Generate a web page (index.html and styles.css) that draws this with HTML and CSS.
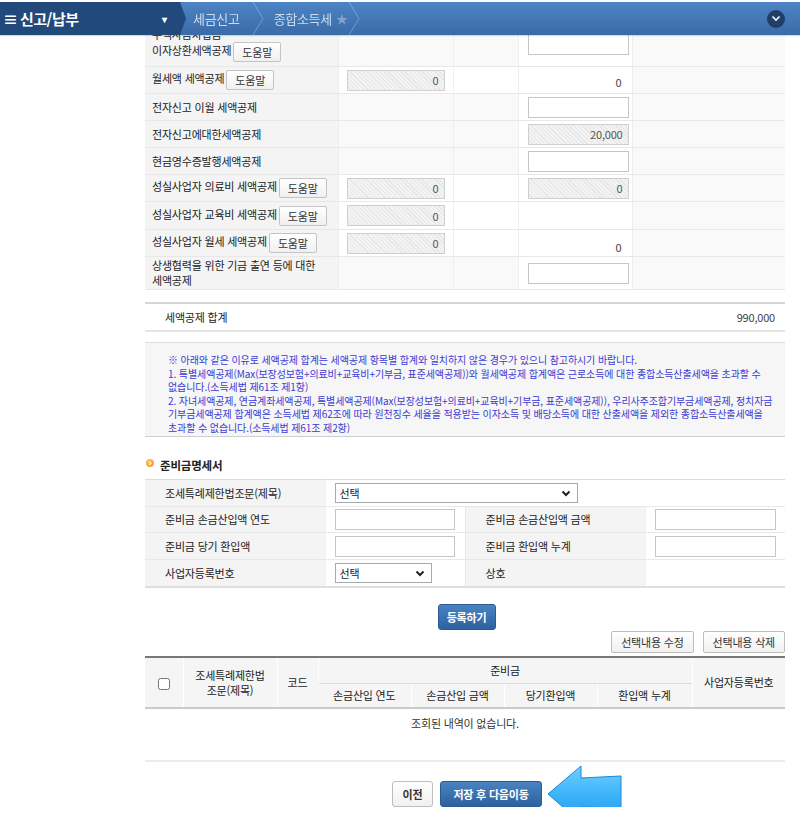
FILE: index.html
```html
<!DOCTYPE html>
<html lang="ko">
<head>
  <meta charset="UTF-8">
  <meta name="viewport" content="width=device-width, initial-scale=1.0">
  <title>신고/납부 - 종합소득세</title>
  <link rel="stylesheet" href="styles.css">
</head>
<body>
  <header class="topbar">
    <div class="menu-title">
      <span class="burger">&#8801;</span>
      <span class="menu-name">신고/납부</span>
      <span class="caret">&#9662;</span>
    </div>
    <nav class="crumbs">
      <span class="crumb">세금신고</span>
      <svg class="sep" width="12" height="33" viewBox="0 0 12 33"><polyline points="1,0 11,16.5 1,33" fill="none" stroke="rgba(255,255,255,0.28)" stroke-width="1"/></svg>
      <span class="crumb">종합소득세</span>
      <span class="star">&#9733;</span>
      <svg class="sep" width="12" height="33" viewBox="0 0 12 33"><polyline points="1,0 11,16.5 1,33" fill="none" stroke="rgba(255,255,255,0.28)" stroke-width="1"/></svg>
    </nav>
    <span class="toggle">
      <svg width="10" height="7" viewBox="0 0 10 7"><polyline points="1.5,1.5 5,5 8.5,1.5" fill="none" stroke="#fff" stroke-width="1.6"/></svg>
    </span>
  </header>

  <main class="content">
    <table class="grid deduct">
      <colgroup>
        <col class="w193"><col class="w115"><col class="w65"><col class="w114"><col class="w153">
      </colgroup>
      <tr class="r-first">
        <th>주택자금차입금<br>이자상환세액공제<button class="help">도움말</button></th>
        <td class="empty"></td><td class="empty"></td>
        <td class="in4"><input class="field w101" type="text"></td>
        <td class="empty"></td>
      </tr>
      <tr>
        <th>월세액 세액공제<button class="help">도움말</button></th>
        <td class="in2"><input class="field w98 locked" type="text" value="0" disabled></td>
        <td></td>
        <td class="num">0</td>
        <td class="empty"></td>
      </tr>
      <tr>
        <th>전자신고 이월 세액공제</th>
        <td class="empty"></td><td class="empty"></td>
        <td class="in4"><input class="field w101" type="text"></td>
        <td class="empty"></td>
      </tr>
      <tr>
        <th>전자신고에대한세액공제</th>
        <td class="empty"></td><td class="empty"></td>
        <td class="in4"><input class="field w101 locked" type="text" value="20,000" disabled></td>
        <td class="empty"></td>
      </tr>
      <tr>
        <th>현금영수증발행세액공제</th>
        <td class="empty"></td><td class="empty"></td>
        <td class="in4"><input class="field w101" type="text"></td>
        <td class="empty"></td>
      </tr>
      <tr>
        <th>성실사업자 의료비 세액공제<button class="help">도움말</button></th>
        <td class="in2"><input class="field w98 locked" type="text" value="0" disabled></td>
        <td></td>
        <td class="in4"><input class="field w101 locked" type="text" value="0" disabled></td>
        <td class="empty"></td>
      </tr>
      <tr class="r-28">
        <th>성실사업자 교육비 세액공제<button class="help">도움말</button></th>
        <td class="in2"><input class="field w98 locked" type="text" value="0" disabled></td>
        <td></td>
        <td></td>
        <td class="empty"></td>
      </tr>
      <tr>
        <th>성실사업자 월세 세액공제<button class="help">도움말</button></th>
        <td class="in2"><input class="field w98 locked" type="text" value="0" disabled></td>
        <td></td>
        <td class="num low">0</td>
        <td class="empty"></td>
      </tr>
      <tr class="r-last">
        <th>상생협력을 위한 기금 출연 등에 대한<br>세액공제</th>
        <td class="empty"></td><td class="empty"></td>
        <td class="in4"><input class="field w101" type="text"></td>
        <td class="empty"></td>
      </tr>
    </table>

    <table class="total">
      <tr>
        <th>세액공제 합계</th>
        <td>990,000</td>
      </tr>
    </table>

    <div class="notice">
      ※ 아래와 같은 이유로 세액공제 합계는 세액공제 항목별 합계와 일치하지 않은 경우가 있으니 참고하시기 바랍니다.<br>
      1. 특별세액공제(Max(보장성보험+의료비+교육비+기부금, 표준세액공제))와 월세액공제 합계액은 근로소득에 대한 종합소득산출세액을 초과할 수<br>
      없습니다.(소득세법 제61조 제1항)<br>
      2. 자녀세액공제, 연금계좌세액공제, 특별세액공제(Max(보장성보험+의료비+교육비+기부금, 표준세액공제)), 우리사주조합기부금세액공제, 정치자금<br>
      기부금세액공제 합계액은 소득세법 제62조에 따라 원천징수 세율을 적용받는 이자소득 및 배당소득에 대한 산출세액을 제외한 종합소득산출세액을<br>
      초과할 수 없습니다.(소득세법 제61조 제2항)
    </div>

    <h2 class="sub-title"><span class="bullet"></span>준비금명세서</h2>

    <table class="grid reserve">
      <colgroup>
        <col class="w180"><col class="w140"><col class="w180"><col class="w140">
      </colgroup>
      <tr>
        <th>조세특례제한법조문(제목)</th>
        <td colspan="3">
          <div class="select w243">
            <select><option>선택</option></select>
            <svg width="10" height="7" viewBox="0 0 10 7"><polyline points="1.5,1.5 5,5 8.5,1.5" fill="none" stroke="#222" stroke-width="2"/></svg>
          </div>
        </td>
      </tr>
      <tr class="r-26">
        <th>준비금 손금산입액 연도</th>
        <td><input class="field w120" type="text"></td>
        <th>준비금 손금산입액 금액</th>
        <td><input class="field w121" type="text"></td>
      </tr>
      <tr>
        <th>준비금 당기 환입액</th>
        <td><input class="field w120" type="text"></td>
        <th>준비금 환입액 누계</th>
        <td><input class="field w121" type="text"></td>
      </tr>
      <tr>
        <th>사업자등록번호</th>
        <td>
          <div class="select w97">
            <select><option>선택</option></select>
            <svg width="10" height="7" viewBox="0 0 10 7"><polyline points="1.5,1.5 5,5 8.5,1.5" fill="none" stroke="#222" stroke-width="2"/></svg>
          </div>
        </td>
        <th>상호</th>
        <td></td>
      </tr>
    </table>

    <div class="register">
      <button class="btn-blue b58">등록하기</button>
    </div>

    <div class="list-tools">
      <button class="btn-gray">선택내용 수정</button>
      <button class="btn-gray">선택내용 삭제</button>
    </div>

    <table class="list">
      <colgroup>
        <col class="w38"><col class="w94"><col class="w41"><col class="w93"><col class="w93"><col class="w93"><col class="w95"><col class="w93">
      </colgroup>
      <thead>
        <tr class="h1">
          <th rowspan="2"><input type="checkbox"></th>
          <th rowspan="2">조세특례제한법<br>조문(제목)</th>
          <th rowspan="2">코드</th>
          <th colspan="4">준비금</th>
          <th rowspan="2">사업자등록번호</th>
        </tr>
        <tr class="h2">
          <th>손금산입 연도</th>
          <th>손금산입 금액</th>
          <th>당기환입액</th>
          <th>환입액 누계</th>
        </tr>
      </thead>
      <tbody>
        <tr><td class="nodata" colspan="8">조회된 내역이 없습니다.</td></tr>
      </tbody>
    </table>

    <div class="bottom-actions">
      <button class="btn-gray big">이전</button>
      <button class="btn-blue b102">저장 후 다음이동</button>
      <svg class="pointer" width="76" height="60" viewBox="0 0 76 60">
        <defs>
          <linearGradient id="arrowFill" x1="0" y1="0" x2="0" y2="1">
            <stop offset="0" stop-color="#6fd0ff"/>
            <stop offset="0.5" stop-color="#3db4fa"/>
            <stop offset="1" stop-color="#1f98ea"/>
          </linearGradient>
        </defs>
        <polygon points="1,29 34,1 34,13 74,11 74,43 34,42 34,58" fill="url(#arrowFill)" stroke="#1a8ad8" stroke-width="1"/>
      </svg>
    </div>
  </main>
</body>
</html>
```

FILE: styles.css
```css
body {
  margin: 0;
  font-family: "Noto Sans CJK KR", "Noto Sans", sans-serif;
  font-size: 11px;
  letter-spacing: -0.2px;
  color: #222;
  background: #fff;
}
button, input, select {
  font-family: inherit;
  letter-spacing: inherit;
}

/* top bar */
.topbar {
  position: fixed;
  top: 2px;
  left: 0;
  right: 0;
  height: 33px;
  display: flex;
  align-items: center;
  background: linear-gradient(#4d84c5, #3b6ba7);
  box-shadow: 0 1px 1px rgba(0, 0, 0, 0.15);
  z-index: 10;
  letter-spacing: 0;
}
.menu-title {
  width: 186px;
  height: 100%;
  box-sizing: border-box;
  padding-left: 3px;
  display: flex;
  align-items: center;
  background: #21497c;
  clip-path: polygon(0 0, 180px 0, 186px 50%, 180px 100%, 0 100%);
  color: #fff;
  font-weight: bold;
}
.burger {
  font-size: 15px;
  width: 17px;
}
.menu-name {
  font-size: 15px;
  letter-spacing: -0.5px;
}
.caret {
  margin-left: auto;
  margin-right: 19px;
  font-size: 10px;
}
.crumbs {
  display: flex;
  align-items: center;
  height: 100%;
  margin-left: 7px;
}
.crumb {
  font-size: 13px;
  color: #cddbee;
  letter-spacing: -0.3px;
}
.sep {
  margin: 0 10px 0 12px;
}
.star {
  color: #86a3cb;
  font-size: 12px;
  margin-left: 4px;
}
.star + .sep {
  margin-left: 0;
}
.toggle {
  margin-left: auto;
  margin-right: 15px;
  width: 18px;
  height: 18px;
  border-radius: 50%;
  background: #203e68;
  display: flex;
  align-items: center;
  justify-content: center;
}

/* content */
.content {
  width: 640px;
  margin-left: 145px;
  padding-top: 23px;
}
table {
  border-collapse: collapse;
  table-layout: fixed;
  width: 640px;
}
.w193 { width: 193px; }
.w115 { width: 115px; }
.w65 { width: 65px; }
.w114 { width: 114px; }
.w153 { width: 153px; }
.w180 { width: 180px; }
.w140 { width: 140px; }
.w38 { width: 38px; }
.w94 { width: 94px; }
.w41 { width: 41px; }
.w93 { width: 93px; }
.w95 { width: 95px; }

.grid th, .grid td {
  border-bottom: 1px solid #e8e8e8;
  border-left: 1px solid #efefef;
  padding: 0;
  height: 26px;
  background: #fff;
}
.grid th {
  background: #f4f4f4;
  font-weight: normal;
  text-align: left;
  white-space: nowrap;
  padding-left: 7px;
  line-height: 15px;
  border-left: 0;
}
.grid td.empty {
  background: #f9f9f9;
}
.deduct .r-first th, .deduct .r-first td {
  height: 43px;
}
.deduct .r-28 th, .deduct .r-28 td {
  height: 27px;
}
.deduct .r-last th, .deduct .r-last td {
  height: 32px;
}
.in2 { padding-left: 8px !important; }
.in4 { padding-left: 9px !important; }
.grid td.num {
  text-align: right;
  padding-right: 10px;
  padding-top: 4px;
  height: 22px;
  color: #444;
}
.grid td.num.low {
  padding-top: 7px;
  height: 19px;
}

.help {
  height: 20px;
  padding: 0 8px;
  margin-left: 2px;
  vertical-align: middle;
  border: 1px solid #c4c4c4;
  border-radius: 2px;
  background: linear-gradient(#fff, #f0f0f0);
  color: #333;
  font-size: 11px;
  line-height: 18px;
}

.field {
  display: block;
  height: 21px;
  box-sizing: border-box;
  border: 1px solid #c6c6c6;
  background: #fff;
  padding: 0 5px;
  font-size: 11px;
  color: #555;
  text-align: right;
}
.field.locked {
  background: repeating-linear-gradient(45deg, #f3f3f3 0 2px, #e6e6e6 2px 3px);
  border-color: #cfcfcf;
}
.w98 { width: 98px; }
.w101 { width: 101px; }
.w120 { width: 120px; }
.w121 { width: 121px; }

.total {
  margin-top: 12px;
  border-top: 2px solid #d6d6d6;
  border-bottom: 2px solid #e4e4e4;
}
.total th, .total td {
  height: 26px;
  padding: 0;
}
.total th {
  width: 173px;
  padding-left: 20px;
  text-align: left;
  font-weight: normal;
}
.total td {
  text-align: right;
  padding-right: 10px;
  color: #444;
}

.notice {
  margin-top: 10px;
  padding: 10px 0 2px 23px;
  background: #f6f6f6;
  border-top: 1px solid #dedede;
  border-bottom: 1px solid #cfcfcf;
  color: #3b3bd4;
  font-size: 10px;
  line-height: 13.5px;
  letter-spacing: -0.1px;
  white-space: nowrap;
}

.sub-title {
  margin: 20px 0 6px;
  height: 16px;
  display: flex;
  align-items: center;
  font-size: 11.5px;
  font-weight: bold;
  color: #222;
}
.bullet {
  width: 8px;
  height: 8px;
  border-radius: 50%;
  background: radial-gradient(circle at 40% 35%, #ffc86a, #f08a12);
  margin: 0 6px 4px 1px;
  position: relative;
}
.bullet::after {
  content: "";
  position: absolute;
  left: 2px;
  top: 2.5px;
  width: 2px;
  height: 2px;
  border-top: 1px solid #fff;
  border-right: 1px solid #fff;
  transform: rotate(45deg);
}

.reserve {
  border-top: 1px solid #dcdcdc;
  border-bottom: 2px solid #dedede;
}
.reserve th {
  padding-left: 20px;
  border-left: 1px solid #e8e8e8;
}
.reserve th:first-child {
  border-left: 0;
}
.reserve td {
  padding-left: 9px;
  height: 26px;
}
.reserve .r-26 th, .reserve .r-26 td {
  height: 25px;
}

.select {
  display: flex;
  align-items: center;
  height: 20px;
  box-sizing: border-box;
  border: 1px solid #a9a9a9;
  background: #fff;
}
.select select {
  flex: 1;
  appearance: none;
  border: 0;
  background: transparent;
  font-size: 11px;
  color: #222;
  padding-left: 4px;
  height: 18px;
  outline: none;
}
.select svg {
  margin-right: 6px;
}
.w243 { width: 243px; }
.w97 { width: 97px; }

.register {
  display: flex;
  justify-content: center;
  margin-top: 16px;
  padding-left: 3px;
}
.btn-blue {
  height: 26px;
  border: 1px solid #2b5b95;
  border-radius: 3px;
  background: linear-gradient(#4a83c2, #2d619f);
  color: #fff;
  font-size: 11px;
  font-weight: bold;
  padding: 0;
}
.b58 { width: 58px; }
.b102 { width: 102px; }
.btn-gray {
  height: 22px;
  padding: 0 9px;
  border: 1px solid #bdbdbd;
  border-radius: 2px;
  background: linear-gradient(#fff, #f0f0f0);
  color: #333;
  font-size: 11px;
}
.btn-gray.big {
  height: 26px;
  width: 41px;
  padding: 0;
  border-radius: 3px;
  font-weight: bold;
}

.list-tools {
  display: flex;
  justify-content: flex-end;
  gap: 9px;
  margin-top: 1px;
}

.list {
  margin-top: 3px;
  border-top: 2px solid #777;
}
.list thead th {
  background: #f5f5f5;
  font-weight: normal;
  text-align: center;
  line-height: 15px;
  padding: 0;
  border-left: 1px solid #fff;
}
.list thead th:first-child {
  border-left: 0;
}
.list .h1 th {
  height: 25px;
}
.list .h2 th {
  height: 23px;
  border-top: 1px solid #dcdcdc;
  border-bottom: 2px solid #cacaca;
}
.list thead tr.h1 th[rowspan] {
  border-bottom: 2px solid #cacaca;
}
.list input[type="checkbox"] {
  margin: 0;
  width: 12px;
  height: 12px;
  vertical-align: middle;
}
.nodata {
  height: 45px;
  padding: 6px 0 0;
  vertical-align: top;
  text-align: center;
  color: #333;
  border-bottom: 2px solid #ececec;
}

.bottom-actions {
  position: relative;
  display: flex;
  justify-content: center;
  gap: 7px;
  margin-top: 19px;
  padding-left: 4px;
}
.pointer {
  position: absolute;
  left: 402px;
  top: -16px;
}
```
